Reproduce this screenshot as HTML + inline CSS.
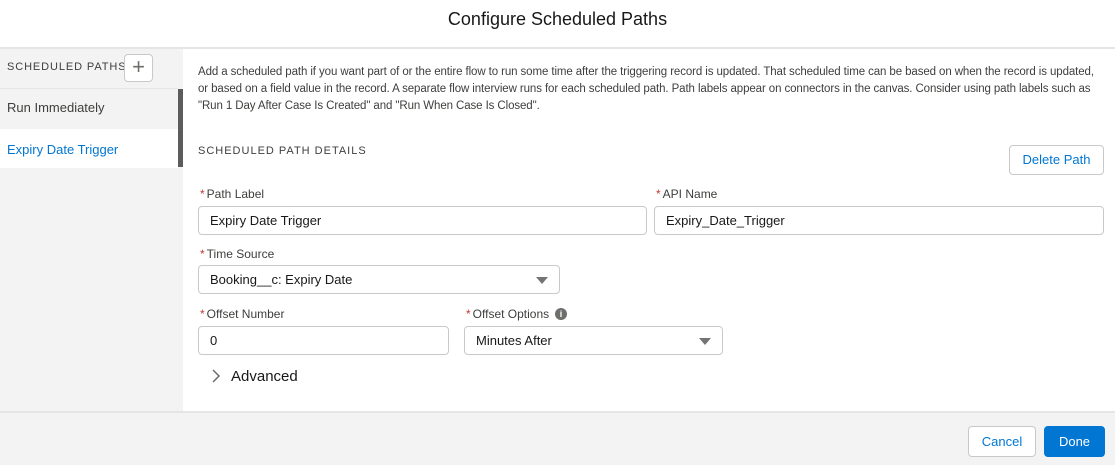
<html><head><style>
body{margin:0;width:1115px;height:463px;position:relative;font-family:"Liberation Sans",sans-serif;background:#fff;overflow:hidden;color:#181818}
.a{position:absolute}
.hd{left:0;top:0;width:1115px;height:47px;border-bottom:2px solid #e5e5e5;text-align:center;font-size:18px;line-height:38px;color:#181818}
.sb{left:0;top:49px;width:183px;height:363px;background:#f3f3f3}
.ft{left:0;top:411px;width:1115px;height:52px;background:#f3f3f3;border-top:2px solid #e5e5e5}
.lbl{font-size:12px;color:#3e3e3c}
.lbl b{color:#c23934;font-weight:normal;margin-right:2px}
.in{border:1px solid #c9c9c9;border-radius:4px;box-sizing:border-box;height:29px;font-size:13px;line-height:27px;padding-left:11px;background:#fff}
.car{position:absolute;right:11px;top:11px;width:0;height:0;border-left:6px solid transparent;border-right:6px solid transparent;border-top:7px solid #747474}
.btn{border:1px solid #c9c9c9;border-radius:4px;box-sizing:border-box;font-size:13px;color:#0176d3;text-align:center;background:#fff}
</style></head><body>
<div class="a hd">Configure Scheduled Paths</div>
<div class="a sb"></div>
<div class="a" style="left:7px;top:61px;font-size:11px;letter-spacing:0.9px;color:#3e3e3c">SCHEDULED PATHS</div>
<div class="a" style="left:124px;top:54px;width:29px;height:28px;border:1px solid #c9c9c9;border-radius:4px;background:#fff;box-sizing:border-box;text-align:center;font-size:22px;line-height:24px;color:#706e6b">+</div>
<div class="a" style="left:0;top:88px;width:178px;height:40px;background:#f3f3f3;border-top:1px solid #e5e5e5"></div>
<div class="a" style="left:7px;top:100px;font-size:13px;color:#3e3e3c">Run Immediately</div>
<div class="a" style="left:0;top:129px;width:178px;height:39px;background:#fff"></div>
<div class="a" style="left:7px;top:142px;font-size:13px;color:#0176d3">Expiry Date Trigger</div>
<div class="a" style="left:178px;top:89px;width:5px;height:78px;background:#5c5c5c"></div>
<div class="a" style="left:198px;top:64px;width:898px;font-size:11.5px;line-height:17px;color:#3e3e3c;letter-spacing:-0.1px">Add a scheduled path if you want part of or the entire flow to run some time after the triggering record is updated. That scheduled time can be based on when the record is updated, or based on a field value in the record. A separate flow interview runs for each scheduled path. Path labels appear on connectors in the canvas. Consider using path labels such as "Run 1 Day After Case Is Created" and "Run When Case Is Closed".</div>
<div class="a" style="left:198px;top:145px;font-size:11px;letter-spacing:1px;color:#3e3e3c">SCHEDULED PATH DETAILS</div>
<div class="a btn" style="left:1009px;top:145px;width:95px;height:30px;line-height:28px">Delete Path</div>
<div class="a lbl" style="left:200px;top:187px"><b>*</b>Path Label</div>
<div class="a in" style="left:198px;top:206px;width:449px">Expiry Date Trigger</div>
<div class="a lbl" style="left:656px;top:187px"><b>*</b>API Name</div>
<div class="a in" style="left:654px;top:206px;width:450px">Expiry_Date_Trigger</div>
<div class="a lbl" style="left:200px;top:247px"><b>*</b>Time Source</div>
<div class="a in" style="left:198px;top:265px;width:362px;line-height:28px">Booking__c: Expiry Date<span class="car"></span></div>
<div class="a lbl" style="left:200px;top:307px"><b>*</b>Offset Number</div>
<div class="a in" style="left:198px;top:326px;width:251px">0</div>
<div class="a lbl" style="left:466px;top:307px"><b>*</b>Offset Options</div>
<div class="a" style="left:555px;top:308px;width:12px;height:12px;border-radius:50%;background:#706e6b;color:#fff;font-size:9px;line-height:12px;text-align:center;font-weight:bold">i</div>
<div class="a in" style="left:464px;top:326px;width:259px">Minutes After<span class="car"></span></div>
<svg class="a" style="left:211px;top:368px" width="10" height="16"><path d="M2 2 L8 8 L2 14" stroke="#706e6b" stroke-width="1.5" fill="none"/></svg>
<div class="a" style="left:231px;top:368px;font-size:15px;color:#181818">Advanced</div>
<div class="a ft"></div>
<div class="a btn" style="left:968px;top:426px;width:68px;height:31px;line-height:29px">Cancel</div>
<div class="a btn" style="left:1044px;top:426px;width:61px;height:31px;line-height:29px;background:#0176d3;border-color:#0176d3;color:#fff">Done</div>
</body></html>
